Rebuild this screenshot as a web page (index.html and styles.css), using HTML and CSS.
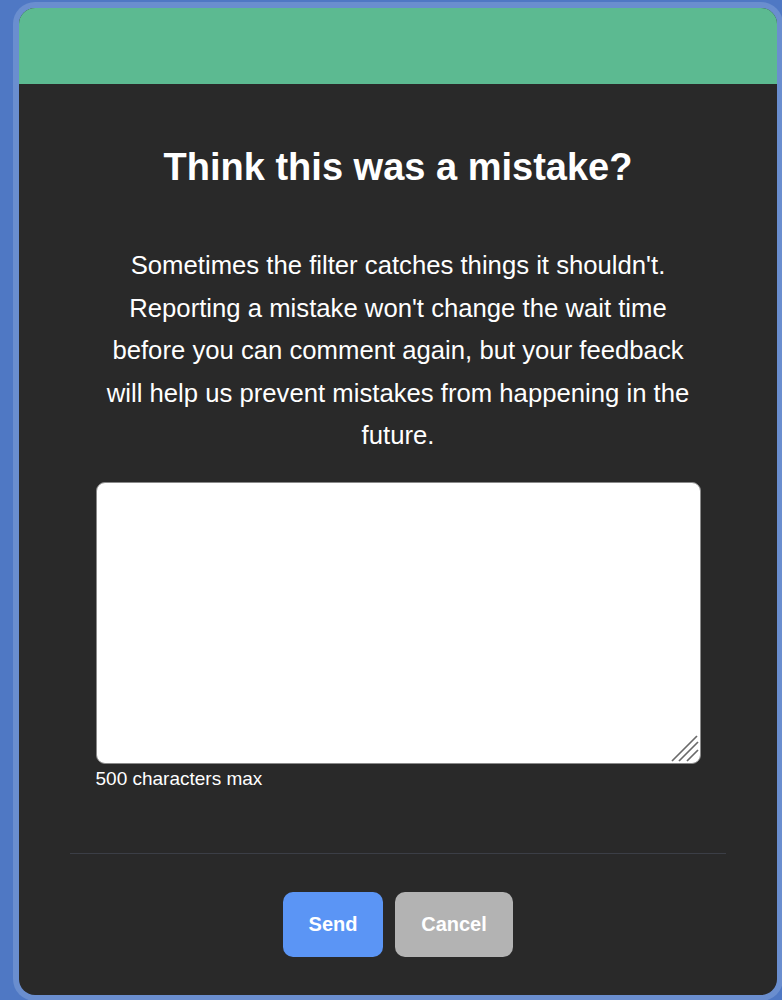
FILE: index.html
```html
<!DOCTYPE html>
<html lang="en">
<head>
<meta charset="utf-8">
<title>Think this was a mistake?</title>
<link rel="stylesheet" href="styles.css">
</head>
<body>
<div class="backdrop">
  <div class="modal">
    <div class="modal-header"></div>
    <div class="modal-body">
      <h1 class="title">Think this was a mistake?</h1>
      <p class="desc">Sometimes the filter catches things it shouldn't. Reporting a mistake won't change the wait time before you can comment again, but your feedback will help us prevent mistakes from happening in the future.</p>
      <div class="field">
        <div class="input-wrap">
          <textarea class="feedback" maxlength="500"></textarea>
          <svg class="grip" width="28" height="28" viewBox="0 0 28 28" aria-hidden="true">
            <line x1="1" y1="27" x2="26" y2="2" />
            <line x1="8" y1="27" x2="27" y2="8" />
            <line x1="16" y1="27" x2="27" y2="16" />
          </svg>
        </div>
        <div class="hint">500 characters max</div>
      </div>
    </div>
    <div class="divider"></div>
    <div class="actions">
      <button class="btn btn-send">Send</button>
      <button class="btn btn-cancel">Cancel</button>
    </div>
  </div>
</div>
</body>
</html>
```
FILE: styles.css
```css
html, body {
  margin: 0;
  padding: 0;
  height: 100%;
}
body {
  background: #4f78c4;
  font-family: "Liberation Sans", Arial, Helvetica, sans-serif;
  overflow: hidden;
}
.backdrop {
  padding: 8px 5px 0 19px;
}
.modal {
  width: 758px;
  height: 987px;
  background: #292929;
  border-radius: 16px;
  box-shadow: 0 0 0 6px #6a8ecf;
  overflow: hidden;
  display: flex;
  flex-direction: column;
}
.modal-header {
  height: 76px;
  background: #5cba91;
  flex: none;
}
.modal-body {
  display: flex;
  flex-direction: column;
  align-items: center;
  color: #ffffff;
}
.title {
  margin: 61px 0 0;
  font-size: 38px;
  line-height: 44px;
  font-weight: bold;
  text-align: center;
}
.desc {
  width: 600px;
  margin: 55px 0 0;
  font-size: 25.7px;
  line-height: 42.5px;
  text-align: center;
}
.field {
  width: 605px;
  margin-top: 25px;
  display: flex;
  flex-direction: column;
}
.input-wrap {
  position: relative;
}
.feedback {
  box-sizing: border-box;
  width: 605px;
  height: 282px;
  margin: 0;
  border: 1px solid #8a8a8a;
  border-radius: 9px;
  background: #ffffff;
  resize: none;
  font-family: "Liberation Sans", Arial, sans-serif;
  font-size: 16px;
  display: block;
}
.grip {
  position: absolute;
  right: 2px;
  bottom: 2px;
  stroke: #6a6a6a;
  stroke-width: 1.7;
}
.hint {
  font-size: 19px;
  line-height: 22px;
  margin-top: 4px;
  color: #ffffff;
}
.divider {
  height: 1px;
  background: #3b3e46;
  margin: 63px 51px 0;
}
.actions {
  display: flex;
  justify-content: center;
  gap: 12px;
  margin-top: 38px;
}
.btn {
  height: 65px;
  border: none;
  border-radius: 10px;
  color: #ffffff;
  font-family: "Liberation Sans", Arial, sans-serif;
  font-weight: bold;
  font-size: 20px;
  cursor: pointer;
}
.btn-send {
  width: 100px;
  background: #5b95f5;
}
.btn-cancel {
  width: 118px;
  background: #b3b3b3;
}
```
